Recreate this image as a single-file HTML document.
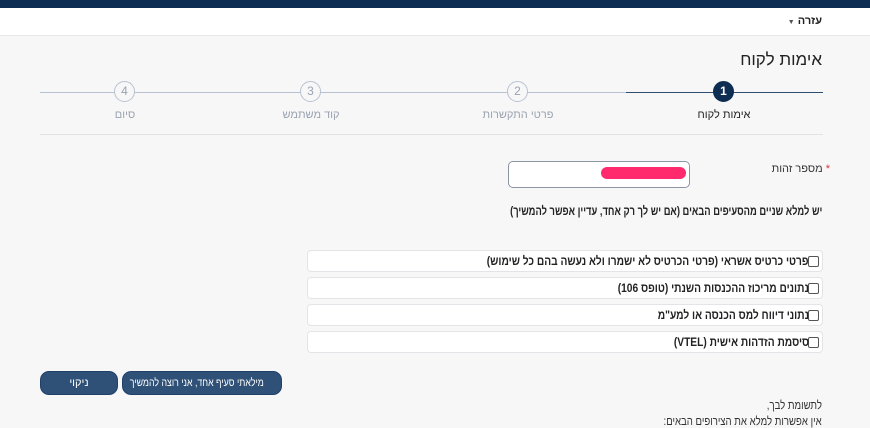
<!DOCTYPE html>
<html dir="rtl"><head><meta charset="utf-8"><style>
*{box-sizing:border-box;margin:0;padding:0}
body{width:870px;height:424px;overflow:hidden;background:#f7f7f8;font-family:"Liberation Sans","Noto Sans CJK SC",sans-serif;color:#222;position:relative}
.a{position:absolute;white-space:nowrap}
.s{display:inline-block;transform-origin:right center}
.circ{position:absolute;width:21px;height:21px;border-radius:50%;border:1.5px solid #b9c2d0;background:#f7f7f8;color:#9aa3b0;font-size:12px;text-align:center;line-height:18px;direction:ltr}
.lbl{position:absolute;font-size:11px;color:#9aa3b0;white-space:nowrap;transform:translateX(50%)}
.row{position:absolute;left:307px;width:516px;height:22px;background:#fff;border:1px solid #e2e4e8;border-radius:4px;font-size:12px;font-weight:bold;color:#222;line-height:20px;padding-right:13px;white-space:nowrap}
.row .s{transform:scaleX(.85)}
.row:before{content:"";position:absolute;right:3px;top:5px;width:9px;height:9px;border:1px solid #555;border-radius:2px;background:#fff}
.btn{position:absolute;top:371px;height:24px;background:#2f5177;color:#fff;border-radius:9px;font-size:11px;text-align:center;line-height:23px;border:1px solid #20406a;white-space:nowrap}
</style></head><body>
<div class="a" style="left:0;top:0;width:870px;height:8px;background:#0e2d52"></div>
<div class="a" style="left:0;top:8px;width:870px;height:28px;background:#fff;border-bottom:1px solid #e6e6e6"></div>
<div class="a" style="right:48px;top:15px;font-size:11px;font-weight:bold;color:#222">עזרה <span style="font-size:7px;color:#555">▼</span></div>
<div class="a" style="right:48px;top:50px;font-size:17px;color:#222">אימות לקוח</div>
<div class="a" style="left:40px;top:92px;width:586px;height:1px;background:#b9c2d0"></div>
<div class="a" style="left:626px;top:92px;width:197px;height:1px;background:#2f4d70"></div>
<div class="circ" style="left:713px;top:81px;background:#0e2d52;border-color:#0e2d52;color:#fff;font-weight:bold">1</div>
<div class="circ" style="left:507px;top:81px">2</div>
<div class="circ" style="left:300px;top:81px">3</div>
<div class="circ" style="left:114px;top:81px">4</div>
<div class="lbl" style="right:146px;top:109px;color:#222">אימות לקוח</div>
<div class="lbl" style="right:352px;top:109px">פרטי התקשרות</div>
<div class="lbl" style="right:559px;top:109px">קוד משתמש</div>
<div class="lbl" style="right:745px;top:109px">סיום</div>
<div class="a" style="left:40px;top:134px;width:783px;height:1px;background:#e3e3e3"></div>
<div class="a" style="right:40px;top:163px;font-size:11px;color:#333"><span style="color:#d33">*</span> מספר זהות</div>
<div class="a" style="left:508px;top:161px;width:182px;height:27px;background:#fff;border:1px solid #8a95a5;border-radius:5px"></div>
<div class="a" style="left:601px;top:167px;width:85px;height:12px;background:#ff2a6d;border-radius:6px"></div>
<div class="a" style="right:48px;top:204px;font-size:12px;font-weight:bold;color:#222"><span class="s" style="transform:scaleX(.78)">יש למלא שניים מהסעיפים הבאים (אם יש לך רק אחד, עדיין אפשר להמשיך)</span></div>
<div class="row" style="top:250px"><span class="s">פרטי כרטיס אשראי (פרטי הכרטיס לא ישמרו ולא נעשה בהם כל שימוש)</span></div>
<div class="row" style="top:277px"><span class="s">נתונים מריכוז ההכנסות השנתי (טופס 106)</span></div>
<div class="row" style="top:304px"><span class="s">נתוני דיווח למס הכנסה או למע"מ</span></div>
<div class="row" style="top:331px"><span class="s">סיסמת הזדהות אישית (VTEL)</span></div>
<div class="btn" style="left:40px;width:78px">ניקוי</div>
<div class="btn" style="left:122px;width:160px"><span style="display:inline-block;transform:scaleX(.8)">מילאתי סעיף אחד, אני רוצה להמשיך</span></div>
<div class="a" style="right:48px;top:398px;font-size:12px;color:#333"><span class="s" style="transform:scaleX(.8)">לתשומת לבך,</span></div>
<div class="a" style="right:48px;top:414px;font-size:12px;color:#333"><span class="s" style="transform:scaleX(.8)">אין אפשרות למלא את הצירופים הבאים:</span></div>
</body></html>
